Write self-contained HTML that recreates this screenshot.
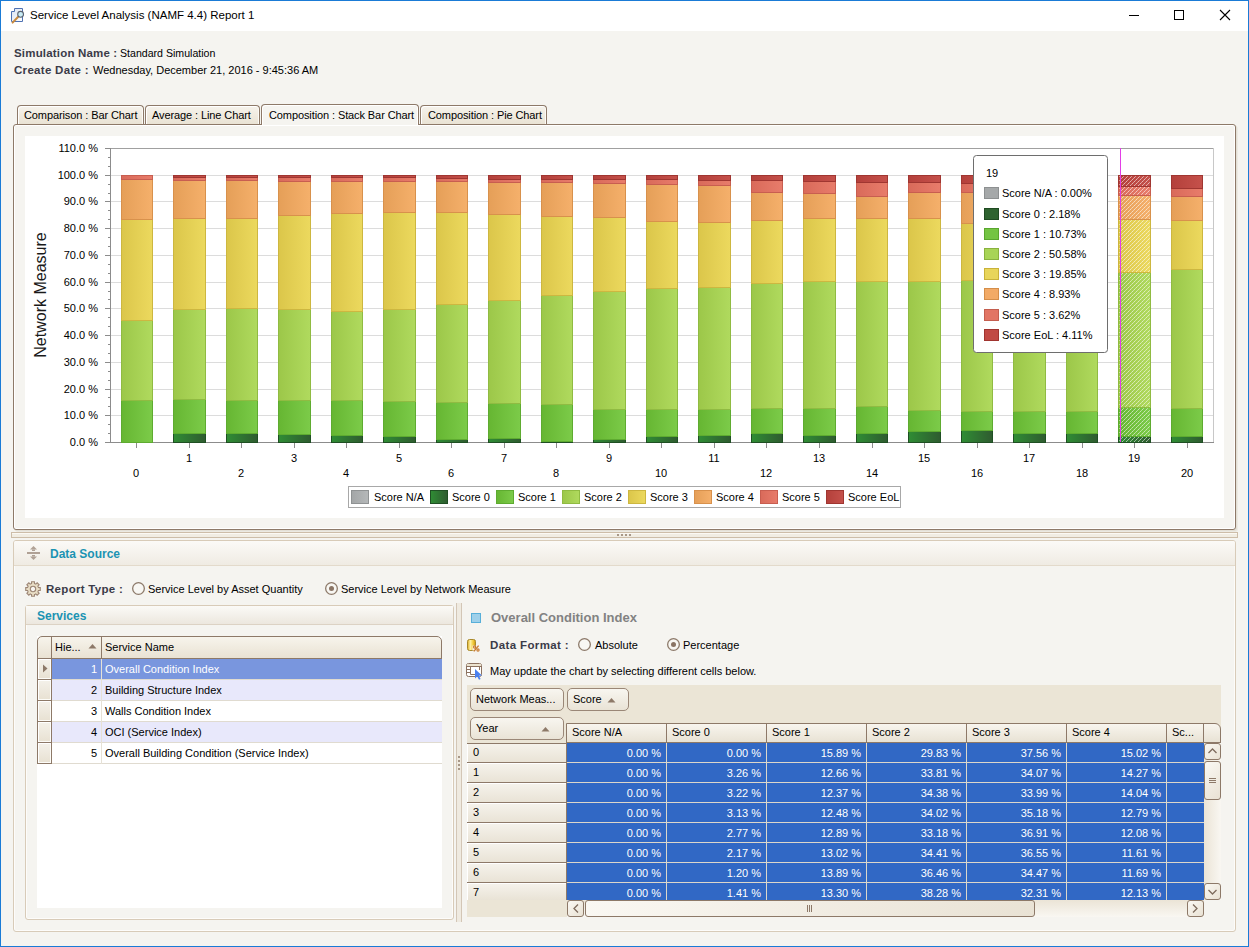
<!DOCTYPE html><html><head><meta charset="utf-8"><style>
html,body{margin:0;padding:0;}
body{width:1249px;height:947px;position:relative;overflow:hidden;background:#f5f4f0;font-family:"Liberation Sans", sans-serif;}
div{font-family:"Liberation Sans", sans-serif;}
</style></head><body>
<div style="position:absolute;left:0px;top:0px;width:1249px;height:947px;box-sizing:border-box;border:1px solid #1a7bd6;"></div>
<div style="position:absolute;left:1px;top:1px;width:1247px;height:30px;box-sizing:border-box;background:#fff;"></div>
<svg style="position:absolute;left:10px;top:7px" width="16" height="17" viewBox="0 0 16 17">
<defs><linearGradient id="docg" x1="0" y1="0" x2="1" y2="1"><stop offset="0" stop-color="#d9e3f3"/><stop offset="1" stop-color="#ffffff"/></linearGradient>
<linearGradient id="hdl" x1="0" y1="0" x2="1" y2="0"><stop offset="0" stop-color="#b87830"/><stop offset="1" stop-color="#f0c070"/></linearGradient></defs>
<path d="M1.5 4.5H4.5V1.5H12.5V14.5H1.5z" fill="url(#docg)" stroke="#4f72b3" stroke-width="1"/>
<path d="M8.2 9.8L2.6 15.6" stroke="#c98b3f" stroke-width="2" stroke-linecap="round"/>
<circle cx="10.6" cy="7.3" r="2.9" fill="#c8ecf6" stroke="#5a6270" stroke-width="1.1"/>
</svg>
<div style="position:absolute;left:30px;top:8.27px;font-size:11.5px;line-height:15.5px;color:#000;font-weight:normal;white-space:nowrap;">Service Level Analysis (NAMF 4.4) Report 1</div>
<div style="position:absolute;left:1129px;top:15px;width:10px;height:1px;box-sizing:border-box;background:#000;"></div>
<div style="position:absolute;left:1174px;top:10px;width:10px;height:10px;box-sizing:border-box;border:1px solid #000;"></div>
<svg style="position:absolute;left:1219px;top:9px" width="12" height="12" viewBox="0 0 12 12"><path d="M1 1L11 11M11 1L1 11" stroke="#000" stroke-width="1.1"/></svg>
<div style="position:absolute;left:14px;top:46.27px;font-size:11.5px;line-height:15.5px;color:#3b3b48;font-weight:bold;white-space:nowrap;letter-spacing:0.18px;">Simulation Name :</div>
<div style="position:absolute;left:120px;top:46.03px;font-size:10.6px;line-height:14.6px;color:#000;font-weight:normal;white-space:nowrap;">Standard Simulation</div>
<div style="position:absolute;left:14px;top:63.27px;font-size:11.5px;line-height:15.5px;color:#3b3b48;font-weight:bold;white-space:nowrap;letter-spacing:0.3px;">Create Date :</div>
<div style="position:absolute;left:93px;top:62.69px;font-size:11px;line-height:15px;color:#000;font-weight:normal;white-space:nowrap;">Wednesday, December 21, 2016 - 9:45:36 AM</div>
<div style="position:absolute;left:17px;top:105px;width:127px;height:20px;box-sizing:border-box;border:1px solid #8d7968;border-bottom:none;border-radius:4px 4px 0 0;background:linear-gradient(#f6f3ec,#e9e2d3);box-shadow:inset 1px 1px 0 #fff,inset -1px 0 0 #fbfaf6;"></div>
<div style="position:absolute;left:24px;top:107.69px;font-size:11px;line-height:15px;color:#000;font-weight:normal;white-space:nowrap;letter-spacing:-0.1px;">Comparison : Bar Chart</div>
<div style="position:absolute;left:145px;top:105px;width:115px;height:20px;box-sizing:border-box;border:1px solid #8d7968;border-bottom:none;border-radius:4px 4px 0 0;background:linear-gradient(#f6f3ec,#e9e2d3);box-shadow:inset 1px 1px 0 #fff,inset -1px 0 0 #fbfaf6;"></div>
<div style="position:absolute;left:152px;top:107.69px;font-size:11px;line-height:15px;color:#000;font-weight:normal;white-space:nowrap;letter-spacing:-0.1px;">Average : Line Chart</div>
<div style="position:absolute;left:420px;top:105px;width:127px;height:20px;box-sizing:border-box;border:1px solid #8d7968;border-bottom:none;border-radius:4px 4px 0 0;background:linear-gradient(#f6f3ec,#e9e2d3);box-shadow:inset 1px 1px 0 #fff,inset -1px 0 0 #fbfaf6;"></div>
<div style="position:absolute;left:428px;top:107.69px;font-size:11px;line-height:15px;color:#000;font-weight:normal;white-space:nowrap;letter-spacing:-0.1px;">Composition : Pie Chart</div>
<div style="position:absolute;left:13px;top:124px;width:1223px;height:406px;box-sizing:border-box;border:1px solid #8d7968;border-radius:3px;background:#f5f4f0;box-shadow:inset 0 0 0 1px #fff, 1px 1px 0 #e3dfd5, 2px 2px 0 #eceae3;"></div>
<div style="position:absolute;left:261px;top:104px;width:158px;height:21px;box-sizing:border-box;border:1px solid #8d7968;border-bottom:none;border-radius:4px 4px 0 0;background:#f5f4f0;box-shadow:inset 1px 1px 0 #fff,inset -1px 0 0 #fff;"></div>
<div style="position:absolute;left:263px;top:124px;width:154px;height:1px;box-sizing:border-box;background:#f5f4f0;"></div>
<div style="position:absolute;left:269px;top:107.69px;font-size:11px;line-height:15px;color:#000;font-weight:normal;white-space:nowrap;letter-spacing:-0.1px;">Composition : Stack Bar Chart</div>
<div style="position:absolute;left:25px;top:136px;width:1199px;height:382px;box-sizing:border-box;background:#fff;"></div>
<svg style="position:absolute;left:25px;top:136px" width="1199" height="382" viewBox="25 136 1199 382" shape-rendering="crispEdges">
<defs>
<linearGradient id="gna" x1="0" y1="0" x2="1" y2="0"><stop offset="0" stop-color="#a3a6a7"/><stop offset="1" stop-color="#b5b8b9"/></linearGradient>
<linearGradient id="gs0" x1="0" y1="0" x2="1" y2="0"><stop offset="0" stop-color="#2f8d34"/><stop offset="1" stop-color="#2f5b30"/></linearGradient>
<linearGradient id="gs1" x1="0" y1="0" x2="1" y2="0"><stop offset="0" stop-color="#66b632"/><stop offset="1" stop-color="#7ccb49"/></linearGradient>
<linearGradient id="gs2" x1="0" y1="0" x2="1" y2="0"><stop offset="0" stop-color="#9cc749"/><stop offset="1" stop-color="#b0da5e"/></linearGradient>
<linearGradient id="gs3" x1="0" y1="0" x2="1" y2="0"><stop offset="0" stop-color="#dbc64a"/><stop offset="1" stop-color="#ecd95e"/></linearGradient>
<linearGradient id="gs4" x1="0" y1="0" x2="1" y2="0"><stop offset="0" stop-color="#e59f58"/><stop offset="1" stop-color="#f5b06b"/></linearGradient>
<linearGradient id="gs5" x1="0" y1="0" x2="1" y2="0"><stop offset="0" stop-color="#d96a5a"/><stop offset="1" stop-color="#e87c6b"/></linearGradient>
<linearGradient id="geol" x1="0" y1="0" x2="1" y2="0"><stop offset="0" stop-color="#b4403b"/><stop offset="1" stop-color="#c5514b"/></linearGradient>
<pattern id="hatch" width="4" height="4" patternUnits="userSpaceOnUse"><rect x="0" y="3" width="1" height="1" fill="rgba(255,255,255,0.6)"/><rect x="1" y="2" width="1" height="1" fill="rgba(255,255,255,0.45)"/><rect x="2" y="1" width="1" height="1" fill="rgba(255,255,255,0.6)"/><rect x="3" y="0" width="1" height="1" fill="rgba(255,255,255,0.45)"/></pattern>
</defs>
<line x1="110" y1="415.5" x2="1214" y2="415.5" stroke="#dcdcdc" stroke-width="1"/>
<line x1="110" y1="389.5" x2="1214" y2="389.5" stroke="#dcdcdc" stroke-width="1"/>
<line x1="110" y1="362.5" x2="1214" y2="362.5" stroke="#dcdcdc" stroke-width="1"/>
<line x1="110" y1="335.5" x2="1214" y2="335.5" stroke="#dcdcdc" stroke-width="1"/>
<line x1="110" y1="308.5" x2="1214" y2="308.5" stroke="#dcdcdc" stroke-width="1"/>
<line x1="110" y1="282.5" x2="1214" y2="282.5" stroke="#dcdcdc" stroke-width="1"/>
<line x1="110" y1="255.5" x2="1214" y2="255.5" stroke="#dcdcdc" stroke-width="1"/>
<line x1="110" y1="228.5" x2="1214" y2="228.5" stroke="#dcdcdc" stroke-width="1"/>
<line x1="110" y1="201.5" x2="1214" y2="201.5" stroke="#dcdcdc" stroke-width="1"/>
<line x1="110" y1="175.5" x2="1214" y2="175.5" stroke="#dcdcdc" stroke-width="1"/>
<line x1="110" y1="148.5" x2="1214" y2="148.5" stroke="#a0a0a0" stroke-width="1"/>
<line x1="1213.5" y1="148" x2="1213.5" y2="442" stroke="#c8c8c8" stroke-width="1"/>
<line x1="105" y1="442.5" x2="1214" y2="442.5" stroke="#8c8c8c" stroke-width="1"/>
<rect x="121.5" y="400.5" width="31" height="42" fill="url(#gs1)" stroke="#5eab30" stroke-width="1"/>
<rect x="121.5" y="320.5" width="31" height="80" fill="url(#gs2)" stroke="#90bb42" stroke-width="1"/>
<rect x="121.5" y="219.5" width="31" height="101" fill="url(#gs3)" stroke="#cdb740" stroke-width="1"/>
<rect x="121.5" y="179.5" width="31" height="40" fill="url(#gs4)" stroke="#d8914c" stroke-width="1"/>
<rect x="121.5" y="175.5" width="31" height="4" fill="url(#gs5)" stroke="#c85e50" stroke-width="1"/>
<rect x="173.5" y="433.5" width="32" height="9" fill="url(#gs0)" stroke="#1f4f23" stroke-width="1"/>
<rect x="173.5" y="399.5" width="32" height="34" fill="url(#gs1)" stroke="#5eab30" stroke-width="1"/>
<rect x="173.5" y="309.5" width="32" height="90" fill="url(#gs2)" stroke="#90bb42" stroke-width="1"/>
<rect x="173.5" y="218.5" width="32" height="91" fill="url(#gs3)" stroke="#cdb740" stroke-width="1"/>
<rect x="173.5" y="180.5" width="32" height="38" fill="url(#gs4)" stroke="#d8914c" stroke-width="1"/>
<rect x="173.5" y="177.5" width="32" height="3" fill="url(#gs5)" stroke="#c85e50" stroke-width="1"/>
<rect x="173.5" y="175.5" width="32" height="2" fill="url(#geol)" stroke="#a03631" stroke-width="1"/>
<rect x="226.5" y="433.5" width="31" height="9" fill="url(#gs0)" stroke="#1f4f23" stroke-width="1"/>
<rect x="226.5" y="400.5" width="31" height="33" fill="url(#gs1)" stroke="#5eab30" stroke-width="1"/>
<rect x="226.5" y="308.5" width="31" height="92" fill="url(#gs2)" stroke="#90bb42" stroke-width="1"/>
<rect x="226.5" y="218.5" width="31" height="90" fill="url(#gs3)" stroke="#cdb740" stroke-width="1"/>
<rect x="226.5" y="180.5" width="31" height="38" fill="url(#gs4)" stroke="#d8914c" stroke-width="1"/>
<rect x="226.5" y="177.5" width="31" height="3" fill="url(#gs5)" stroke="#c85e50" stroke-width="1"/>
<rect x="226.5" y="175.5" width="31" height="2" fill="url(#geol)" stroke="#a03631" stroke-width="1"/>
<rect x="278.5" y="434.5" width="32" height="8" fill="url(#gs0)" stroke="#1f4f23" stroke-width="1"/>
<rect x="278.5" y="400.5" width="32" height="34" fill="url(#gs1)" stroke="#5eab30" stroke-width="1"/>
<rect x="278.5" y="309.5" width="32" height="91" fill="url(#gs2)" stroke="#90bb42" stroke-width="1"/>
<rect x="278.5" y="215.5" width="32" height="94" fill="url(#gs3)" stroke="#cdb740" stroke-width="1"/>
<rect x="278.5" y="181.5" width="32" height="34" fill="url(#gs4)" stroke="#d8914c" stroke-width="1"/>
<rect x="278.5" y="177.5" width="32" height="4" fill="url(#gs5)" stroke="#c85e50" stroke-width="1"/>
<rect x="278.5" y="175.5" width="32" height="2" fill="url(#geol)" stroke="#a03631" stroke-width="1"/>
<rect x="331.5" y="435.5" width="31" height="7" fill="url(#gs0)" stroke="#1f4f23" stroke-width="1"/>
<rect x="331.5" y="400.5" width="31" height="35" fill="url(#gs1)" stroke="#5eab30" stroke-width="1"/>
<rect x="331.5" y="311.5" width="31" height="89" fill="url(#gs2)" stroke="#90bb42" stroke-width="1"/>
<rect x="331.5" y="213.5" width="31" height="98" fill="url(#gs3)" stroke="#cdb740" stroke-width="1"/>
<rect x="331.5" y="181.5" width="31" height="32" fill="url(#gs4)" stroke="#d8914c" stroke-width="1"/>
<rect x="331.5" y="177.5" width="31" height="4" fill="url(#gs5)" stroke="#c85e50" stroke-width="1"/>
<rect x="331.5" y="175.5" width="31" height="2" fill="url(#geol)" stroke="#a03631" stroke-width="1"/>
<rect x="383.5" y="436.5" width="32" height="6" fill="url(#gs0)" stroke="#1f4f23" stroke-width="1"/>
<rect x="383.5" y="401.5" width="32" height="35" fill="url(#gs1)" stroke="#5eab30" stroke-width="1"/>
<rect x="383.5" y="309.5" width="32" height="92" fill="url(#gs2)" stroke="#90bb42" stroke-width="1"/>
<rect x="383.5" y="212.5" width="32" height="97" fill="url(#gs3)" stroke="#cdb740" stroke-width="1"/>
<rect x="383.5" y="181.5" width="32" height="31" fill="url(#gs4)" stroke="#d8914c" stroke-width="1"/>
<rect x="383.5" y="177.5" width="32" height="4" fill="url(#gs5)" stroke="#c85e50" stroke-width="1"/>
<rect x="383.5" y="175.5" width="32" height="2" fill="url(#geol)" stroke="#a03631" stroke-width="1"/>
<rect x="436.5" y="439.5" width="31" height="3" fill="url(#gs0)" stroke="#1f4f23" stroke-width="1"/>
<rect x="436.5" y="402.5" width="31" height="37" fill="url(#gs1)" stroke="#5eab30" stroke-width="1"/>
<rect x="436.5" y="304.5" width="31" height="98" fill="url(#gs2)" stroke="#90bb42" stroke-width="1"/>
<rect x="436.5" y="212.5" width="31" height="92" fill="url(#gs3)" stroke="#cdb740" stroke-width="1"/>
<rect x="436.5" y="181.5" width="31" height="31" fill="url(#gs4)" stroke="#d8914c" stroke-width="1"/>
<rect x="436.5" y="178.5" width="31" height="3" fill="url(#gs5)" stroke="#c85e50" stroke-width="1"/>
<rect x="436.5" y="175.5" width="31" height="3" fill="url(#geol)" stroke="#a03631" stroke-width="1"/>
<rect x="488.5" y="438.5" width="32" height="4" fill="url(#gs0)" stroke="#1f4f23" stroke-width="1"/>
<rect x="488.5" y="403.5" width="32" height="35" fill="url(#gs1)" stroke="#5eab30" stroke-width="1"/>
<rect x="488.5" y="300.5" width="32" height="103" fill="url(#gs2)" stroke="#90bb42" stroke-width="1"/>
<rect x="488.5" y="214.5" width="32" height="86" fill="url(#gs3)" stroke="#cdb740" stroke-width="1"/>
<rect x="488.5" y="182.5" width="32" height="32" fill="url(#gs4)" stroke="#d8914c" stroke-width="1"/>
<rect x="488.5" y="179.5" width="32" height="3" fill="url(#gs5)" stroke="#c85e50" stroke-width="1"/>
<rect x="488.5" y="175.5" width="32" height="4" fill="url(#geol)" stroke="#a03631" stroke-width="1"/>
<rect x="541.5" y="441.5" width="31" height="1" fill="url(#gs0)" stroke="#1f4f23" stroke-width="1"/>
<rect x="541.5" y="404.5" width="31" height="37" fill="url(#gs1)" stroke="#5eab30" stroke-width="1"/>
<rect x="541.5" y="295.5" width="31" height="109" fill="url(#gs2)" stroke="#90bb42" stroke-width="1"/>
<rect x="541.5" y="216.5" width="31" height="79" fill="url(#gs3)" stroke="#cdb740" stroke-width="1"/>
<rect x="541.5" y="182.5" width="31" height="34" fill="url(#gs4)" stroke="#d8914c" stroke-width="1"/>
<rect x="541.5" y="179.5" width="31" height="3" fill="url(#gs5)" stroke="#c85e50" stroke-width="1"/>
<rect x="541.5" y="175.5" width="31" height="4" fill="url(#geol)" stroke="#a03631" stroke-width="1"/>
<rect x="593.5" y="439.5" width="32" height="3" fill="url(#gs0)" stroke="#1f4f23" stroke-width="1"/>
<rect x="593.5" y="409.5" width="32" height="30" fill="url(#gs1)" stroke="#5eab30" stroke-width="1"/>
<rect x="593.5" y="291.5" width="32" height="118" fill="url(#gs2)" stroke="#90bb42" stroke-width="1"/>
<rect x="593.5" y="217.5" width="32" height="74" fill="url(#gs3)" stroke="#cdb740" stroke-width="1"/>
<rect x="593.5" y="183.5" width="32" height="34" fill="url(#gs4)" stroke="#d8914c" stroke-width="1"/>
<rect x="593.5" y="179.5" width="32" height="4" fill="url(#gs5)" stroke="#c85e50" stroke-width="1"/>
<rect x="593.5" y="175.5" width="32" height="4" fill="url(#geol)" stroke="#a03631" stroke-width="1"/>
<rect x="646.5" y="436.5" width="31" height="6" fill="url(#gs0)" stroke="#1f4f23" stroke-width="1"/>
<rect x="646.5" y="409.5" width="31" height="27" fill="url(#gs1)" stroke="#5eab30" stroke-width="1"/>
<rect x="646.5" y="288.5" width="31" height="121" fill="url(#gs2)" stroke="#90bb42" stroke-width="1"/>
<rect x="646.5" y="221.5" width="31" height="67" fill="url(#gs3)" stroke="#cdb740" stroke-width="1"/>
<rect x="646.5" y="184.5" width="31" height="37" fill="url(#gs4)" stroke="#d8914c" stroke-width="1"/>
<rect x="646.5" y="179.5" width="31" height="5" fill="url(#gs5)" stroke="#c85e50" stroke-width="1"/>
<rect x="646.5" y="175.5" width="31" height="4" fill="url(#geol)" stroke="#a03631" stroke-width="1"/>
<rect x="698.5" y="435.5" width="32" height="7" fill="url(#gs0)" stroke="#1f4f23" stroke-width="1"/>
<rect x="698.5" y="409.5" width="32" height="26" fill="url(#gs1)" stroke="#5eab30" stroke-width="1"/>
<rect x="698.5" y="287.5" width="32" height="122" fill="url(#gs2)" stroke="#90bb42" stroke-width="1"/>
<rect x="698.5" y="222.5" width="32" height="65" fill="url(#gs3)" stroke="#cdb740" stroke-width="1"/>
<rect x="698.5" y="185.5" width="32" height="37" fill="url(#gs4)" stroke="#d8914c" stroke-width="1"/>
<rect x="698.5" y="180.5" width="32" height="5" fill="url(#gs5)" stroke="#c85e50" stroke-width="1"/>
<rect x="698.5" y="175.5" width="32" height="5" fill="url(#geol)" stroke="#a03631" stroke-width="1"/>
<rect x="751.5" y="433.5" width="31" height="9" fill="url(#gs0)" stroke="#1f4f23" stroke-width="1"/>
<rect x="751.5" y="408.5" width="31" height="25" fill="url(#gs1)" stroke="#5eab30" stroke-width="1"/>
<rect x="751.5" y="283.5" width="31" height="125" fill="url(#gs2)" stroke="#90bb42" stroke-width="1"/>
<rect x="751.5" y="220.5" width="31" height="63" fill="url(#gs3)" stroke="#cdb740" stroke-width="1"/>
<rect x="751.5" y="192.5" width="31" height="28" fill="url(#gs4)" stroke="#d8914c" stroke-width="1"/>
<rect x="751.5" y="180.5" width="31" height="12" fill="url(#gs5)" stroke="#c85e50" stroke-width="1"/>
<rect x="751.5" y="175.5" width="31" height="5" fill="url(#geol)" stroke="#a03631" stroke-width="1"/>
<rect x="803.5" y="435.5" width="32" height="7" fill="url(#gs0)" stroke="#1f4f23" stroke-width="1"/>
<rect x="803.5" y="408.5" width="32" height="27" fill="url(#gs1)" stroke="#5eab30" stroke-width="1"/>
<rect x="803.5" y="281.5" width="32" height="127" fill="url(#gs2)" stroke="#90bb42" stroke-width="1"/>
<rect x="803.5" y="218.5" width="32" height="63" fill="url(#gs3)" stroke="#cdb740" stroke-width="1"/>
<rect x="803.5" y="193.5" width="32" height="25" fill="url(#gs4)" stroke="#d8914c" stroke-width="1"/>
<rect x="803.5" y="181.5" width="32" height="12" fill="url(#gs5)" stroke="#c85e50" stroke-width="1"/>
<rect x="803.5" y="175.5" width="32" height="6" fill="url(#geol)" stroke="#a03631" stroke-width="1"/>
<rect x="856.5" y="433.5" width="31" height="9" fill="url(#gs0)" stroke="#1f4f23" stroke-width="1"/>
<rect x="856.5" y="406.5" width="31" height="27" fill="url(#gs1)" stroke="#5eab30" stroke-width="1"/>
<rect x="856.5" y="281.5" width="31" height="125" fill="url(#gs2)" stroke="#90bb42" stroke-width="1"/>
<rect x="856.5" y="218.5" width="31" height="63" fill="url(#gs3)" stroke="#cdb740" stroke-width="1"/>
<rect x="856.5" y="196.5" width="31" height="22" fill="url(#gs4)" stroke="#d8914c" stroke-width="1"/>
<rect x="856.5" y="182.5" width="31" height="14" fill="url(#gs5)" stroke="#c85e50" stroke-width="1"/>
<rect x="856.5" y="175.5" width="31" height="7" fill="url(#geol)" stroke="#a03631" stroke-width="1"/>
<rect x="908.5" y="431.5" width="32" height="11" fill="url(#gs0)" stroke="#1f4f23" stroke-width="1"/>
<rect x="908.5" y="410.5" width="32" height="21" fill="url(#gs1)" stroke="#5eab30" stroke-width="1"/>
<rect x="908.5" y="281.5" width="32" height="129" fill="url(#gs2)" stroke="#90bb42" stroke-width="1"/>
<rect x="908.5" y="218.5" width="32" height="63" fill="url(#gs3)" stroke="#cdb740" stroke-width="1"/>
<rect x="908.5" y="192.5" width="32" height="26" fill="url(#gs4)" stroke="#d8914c" stroke-width="1"/>
<rect x="908.5" y="182.5" width="32" height="10" fill="url(#gs5)" stroke="#c85e50" stroke-width="1"/>
<rect x="908.5" y="175.5" width="32" height="7" fill="url(#geol)" stroke="#a03631" stroke-width="1"/>
<rect x="961.5" y="430.5" width="31" height="12" fill="url(#gs0)" stroke="#1f4f23" stroke-width="1"/>
<rect x="961.5" y="411.5" width="31" height="19" fill="url(#gs1)" stroke="#5eab30" stroke-width="1"/>
<rect x="961.5" y="280.5" width="31" height="131" fill="url(#gs2)" stroke="#90bb42" stroke-width="1"/>
<rect x="961.5" y="223.5" width="31" height="57" fill="url(#gs3)" stroke="#cdb740" stroke-width="1"/>
<rect x="961.5" y="192.5" width="31" height="31" fill="url(#gs4)" stroke="#d8914c" stroke-width="1"/>
<rect x="961.5" y="183.5" width="31" height="9" fill="url(#gs5)" stroke="#c85e50" stroke-width="1"/>
<rect x="961.5" y="175.5" width="31" height="8" fill="url(#geol)" stroke="#a03631" stroke-width="1"/>
<rect x="1013.5" y="433.5" width="32" height="9" fill="url(#gs0)" stroke="#1f4f23" stroke-width="1"/>
<rect x="1013.5" y="411.5" width="32" height="22" fill="url(#gs1)" stroke="#5eab30" stroke-width="1"/>
<rect x="1013.5" y="276.5" width="32" height="135" fill="url(#gs2)" stroke="#90bb42" stroke-width="1"/>
<rect x="1013.5" y="221.5" width="32" height="55" fill="url(#gs3)" stroke="#cdb740" stroke-width="1"/>
<rect x="1013.5" y="195.5" width="32" height="26" fill="url(#gs4)" stroke="#d8914c" stroke-width="1"/>
<rect x="1013.5" y="184.5" width="32" height="11" fill="url(#gs5)" stroke="#c85e50" stroke-width="1"/>
<rect x="1013.5" y="175.5" width="32" height="9" fill="url(#geol)" stroke="#a03631" stroke-width="1"/>
<rect x="1066.5" y="433.5" width="31" height="9" fill="url(#gs0)" stroke="#1f4f23" stroke-width="1"/>
<rect x="1066.5" y="411.5" width="31" height="22" fill="url(#gs1)" stroke="#5eab30" stroke-width="1"/>
<rect x="1066.5" y="274.5" width="31" height="137" fill="url(#gs2)" stroke="#90bb42" stroke-width="1"/>
<rect x="1066.5" y="220.5" width="31" height="54" fill="url(#gs3)" stroke="#cdb740" stroke-width="1"/>
<rect x="1066.5" y="195.5" width="31" height="25" fill="url(#gs4)" stroke="#d8914c" stroke-width="1"/>
<rect x="1066.5" y="185.5" width="31" height="10" fill="url(#gs5)" stroke="#c85e50" stroke-width="1"/>
<rect x="1066.5" y="175.5" width="31" height="10" fill="url(#geol)" stroke="#a03631" stroke-width="1"/>
<rect x="1118.5" y="436.5" width="32" height="6" fill="url(#gs0)" stroke="#1f4f23" stroke-width="1"/>
<rect x="1119" y="437" width="31" height="5" fill="url(#hatch)"/>
<rect x="1118.5" y="407.5" width="32" height="29" fill="url(#gs1)" stroke="#5eab30" stroke-width="1"/>
<rect x="1119" y="408" width="31" height="28" fill="url(#hatch)"/>
<rect x="1118.5" y="272.5" width="32" height="135" fill="url(#gs2)" stroke="#90bb42" stroke-width="1"/>
<rect x="1119" y="273" width="31" height="134" fill="url(#hatch)"/>
<rect x="1118.5" y="219.5" width="32" height="53" fill="url(#gs3)" stroke="#cdb740" stroke-width="1"/>
<rect x="1119" y="220" width="31" height="52" fill="url(#hatch)"/>
<rect x="1118.5" y="195.5" width="32" height="24" fill="url(#gs4)" stroke="#d8914c" stroke-width="1"/>
<rect x="1119" y="196" width="31" height="23" fill="url(#hatch)"/>
<rect x="1118.5" y="186.5" width="32" height="9" fill="url(#gs5)" stroke="#c85e50" stroke-width="1"/>
<rect x="1119" y="187" width="31" height="8" fill="url(#hatch)"/>
<rect x="1118.5" y="175.5" width="32" height="11" fill="url(#geol)" stroke="#a03631" stroke-width="1"/>
<rect x="1119" y="176" width="31" height="10" fill="url(#hatch)"/>
<rect x="1171.5" y="436.5" width="31" height="6" fill="url(#gs0)" stroke="#1f4f23" stroke-width="1"/>
<rect x="1171.5" y="408.5" width="31" height="28" fill="url(#gs1)" stroke="#5eab30" stroke-width="1"/>
<rect x="1171.5" y="269.5" width="31" height="139" fill="url(#gs2)" stroke="#90bb42" stroke-width="1"/>
<rect x="1171.5" y="220.5" width="31" height="49" fill="url(#gs3)" stroke="#cdb740" stroke-width="1"/>
<rect x="1171.5" y="196.5" width="31" height="24" fill="url(#gs4)" stroke="#d8914c" stroke-width="1"/>
<rect x="1171.5" y="188.5" width="31" height="8" fill="url(#gs5)" stroke="#c85e50" stroke-width="1"/>
<rect x="1171.5" y="175.5" width="31" height="13" fill="url(#geol)" stroke="#a03631" stroke-width="1"/>
<line x1="110.5" y1="148" x2="110.5" y2="443" stroke="#8c8c8c" stroke-width="1"/>
<line x1="105" y1="442.5" x2="110" y2="442.5" stroke="#8c8c8c" stroke-width="1"/>
<line x1="108" y1="433.5" x2="110" y2="433.5" stroke="#8c8c8c" stroke-width="1"/>
<line x1="108" y1="424.5" x2="110" y2="424.5" stroke="#8c8c8c" stroke-width="1"/>
<line x1="105" y1="415.5" x2="110" y2="415.5" stroke="#8c8c8c" stroke-width="1"/>
<line x1="108" y1="406.5" x2="110" y2="406.5" stroke="#8c8c8c" stroke-width="1"/>
<line x1="108" y1="397.5" x2="110" y2="397.5" stroke="#8c8c8c" stroke-width="1"/>
<line x1="105" y1="389.5" x2="110" y2="389.5" stroke="#8c8c8c" stroke-width="1"/>
<line x1="108" y1="380.5" x2="110" y2="380.5" stroke="#8c8c8c" stroke-width="1"/>
<line x1="108" y1="371.5" x2="110" y2="371.5" stroke="#8c8c8c" stroke-width="1"/>
<line x1="105" y1="362.5" x2="110" y2="362.5" stroke="#8c8c8c" stroke-width="1"/>
<line x1="108" y1="353.5" x2="110" y2="353.5" stroke="#8c8c8c" stroke-width="1"/>
<line x1="108" y1="344.5" x2="110" y2="344.5" stroke="#8c8c8c" stroke-width="1"/>
<line x1="105" y1="335.5" x2="110" y2="335.5" stroke="#8c8c8c" stroke-width="1"/>
<line x1="108" y1="326.5" x2="110" y2="326.5" stroke="#8c8c8c" stroke-width="1"/>
<line x1="108" y1="317.5" x2="110" y2="317.5" stroke="#8c8c8c" stroke-width="1"/>
<line x1="105" y1="308.5" x2="110" y2="308.5" stroke="#8c8c8c" stroke-width="1"/>
<line x1="108" y1="299.5" x2="110" y2="299.5" stroke="#8c8c8c" stroke-width="1"/>
<line x1="108" y1="291.5" x2="110" y2="291.5" stroke="#8c8c8c" stroke-width="1"/>
<line x1="105" y1="282.5" x2="110" y2="282.5" stroke="#8c8c8c" stroke-width="1"/>
<line x1="108" y1="273.5" x2="110" y2="273.5" stroke="#8c8c8c" stroke-width="1"/>
<line x1="108" y1="264.5" x2="110" y2="264.5" stroke="#8c8c8c" stroke-width="1"/>
<line x1="105" y1="255.5" x2="110" y2="255.5" stroke="#8c8c8c" stroke-width="1"/>
<line x1="108" y1="246.5" x2="110" y2="246.5" stroke="#8c8c8c" stroke-width="1"/>
<line x1="108" y1="237.5" x2="110" y2="237.5" stroke="#8c8c8c" stroke-width="1"/>
<line x1="105" y1="228.5" x2="110" y2="228.5" stroke="#8c8c8c" stroke-width="1"/>
<line x1="108" y1="219.5" x2="110" y2="219.5" stroke="#8c8c8c" stroke-width="1"/>
<line x1="108" y1="210.5" x2="110" y2="210.5" stroke="#8c8c8c" stroke-width="1"/>
<line x1="105" y1="201.5" x2="110" y2="201.5" stroke="#8c8c8c" stroke-width="1"/>
<line x1="108" y1="193.5" x2="110" y2="193.5" stroke="#8c8c8c" stroke-width="1"/>
<line x1="108" y1="184.5" x2="110" y2="184.5" stroke="#8c8c8c" stroke-width="1"/>
<line x1="105" y1="175.5" x2="110" y2="175.5" stroke="#8c8c8c" stroke-width="1"/>
<line x1="108" y1="166.5" x2="110" y2="166.5" stroke="#8c8c8c" stroke-width="1"/>
<line x1="108" y1="157.5" x2="110" y2="157.5" stroke="#8c8c8c" stroke-width="1"/>
<line x1="105" y1="148.5" x2="110" y2="148.5" stroke="#8c8c8c" stroke-width="1"/>
<line x1="136.5" y1="443" x2="136.5" y2="448" stroke="#8c8c8c" stroke-width="1"/>
<line x1="189.5" y1="443" x2="189.5" y2="448" stroke="#8c8c8c" stroke-width="1"/>
<line x1="241.5" y1="443" x2="241.5" y2="448" stroke="#8c8c8c" stroke-width="1"/>
<line x1="294.5" y1="443" x2="294.5" y2="448" stroke="#8c8c8c" stroke-width="1"/>
<line x1="346.5" y1="443" x2="346.5" y2="448" stroke="#8c8c8c" stroke-width="1"/>
<line x1="399.5" y1="443" x2="399.5" y2="448" stroke="#8c8c8c" stroke-width="1"/>
<line x1="451.5" y1="443" x2="451.5" y2="448" stroke="#8c8c8c" stroke-width="1"/>
<line x1="504.5" y1="443" x2="504.5" y2="448" stroke="#8c8c8c" stroke-width="1"/>
<line x1="556.5" y1="443" x2="556.5" y2="448" stroke="#8c8c8c" stroke-width="1"/>
<line x1="609.5" y1="443" x2="609.5" y2="448" stroke="#8c8c8c" stroke-width="1"/>
<line x1="661.5" y1="443" x2="661.5" y2="448" stroke="#8c8c8c" stroke-width="1"/>
<line x1="714.5" y1="443" x2="714.5" y2="448" stroke="#8c8c8c" stroke-width="1"/>
<line x1="766.5" y1="443" x2="766.5" y2="448" stroke="#8c8c8c" stroke-width="1"/>
<line x1="819.5" y1="443" x2="819.5" y2="448" stroke="#8c8c8c" stroke-width="1"/>
<line x1="872.5" y1="443" x2="872.5" y2="448" stroke="#8c8c8c" stroke-width="1"/>
<line x1="924.5" y1="443" x2="924.5" y2="448" stroke="#8c8c8c" stroke-width="1"/>
<line x1="977.5" y1="443" x2="977.5" y2="448" stroke="#8c8c8c" stroke-width="1"/>
<line x1="1029.5" y1="443" x2="1029.5" y2="448" stroke="#8c8c8c" stroke-width="1"/>
<line x1="1082.5" y1="443" x2="1082.5" y2="448" stroke="#8c8c8c" stroke-width="1"/>
<line x1="1134.5" y1="443" x2="1134.5" y2="448" stroke="#8c8c8c" stroke-width="1"/>
<line x1="1187.5" y1="443" x2="1187.5" y2="448" stroke="#8c8c8c" stroke-width="1"/>
<line x1="1120.5" y1="148" x2="1120.5" y2="442" stroke="#e23ee6" stroke-width="1"/>
<rect x="973.5" y="155.5" width="134" height="197" rx="3" ry="3" fill="#fff" stroke="#6e6e6e" stroke-width="1" shape-rendering="geometricPrecision"/>
<rect x="984.5" y="187.5" width="14" height="11" fill="#a5a8a9" stroke="#8d9091" stroke-width="1"/>
<rect x="984.5" y="208.5" width="14" height="11" fill="#2e6330" stroke="#1f4a22" stroke-width="1"/>
<rect x="984.5" y="228.5" width="14" height="11" fill="#74c443" stroke="#5aa62e" stroke-width="1"/>
<rect x="984.5" y="248.5" width="14" height="11" fill="#a8d456" stroke="#8ab23e" stroke-width="1"/>
<rect x="984.5" y="268.5" width="14" height="11" fill="#e8d55a" stroke="#c9b23a" stroke-width="1"/>
<rect x="984.5" y="288.5" width="14" height="11" fill="#f2aa66" stroke="#d48e4a" stroke-width="1"/>
<rect x="984.5" y="309.5" width="14" height="11" fill="#e27564" stroke="#c45e4f" stroke-width="1"/>
<rect x="984.5" y="329.5" width="14" height="11" fill="#c14a44" stroke="#a0342f" stroke-width="1"/>
<rect x="348.5" y="486.5" width="552" height="21" fill="#fff" stroke="#a8a8a8" stroke-width="1"/>
<rect x="351.5" y="490.5" width="17" height="13" fill="url(#gna)" stroke="#8f9293" stroke-width="1"/>
<rect x="430.5" y="490.5" width="17" height="13" fill="url(#gs0)" stroke="#1f4f23" stroke-width="1"/>
<rect x="496.5" y="490.5" width="17" height="13" fill="url(#gs1)" stroke="#5eab30" stroke-width="1"/>
<rect x="562.5" y="490.5" width="17" height="13" fill="url(#gs2)" stroke="#90bb42" stroke-width="1"/>
<rect x="628.5" y="490.5" width="17" height="13" fill="url(#gs3)" stroke="#cdb740" stroke-width="1"/>
<rect x="694.5" y="490.5" width="17" height="13" fill="url(#gs4)" stroke="#d8914c" stroke-width="1"/>
<rect x="760.5" y="490.5" width="17" height="13" fill="url(#gs5)" stroke="#c85e50" stroke-width="1"/>
<rect x="826.5" y="490.5" width="17" height="13" fill="url(#geol)" stroke="#a03631" stroke-width="1"/>
</svg>
<div style="position:absolute;right:1151px;top:434.69px;font-size:11px;line-height:15px;color:#000;font-weight:normal;white-space:nowrap;text-align:right;">0.0 %</div>
<div style="position:absolute;right:1151px;top:407.69px;font-size:11px;line-height:15px;color:#000;font-weight:normal;white-space:nowrap;text-align:right;">10.0 %</div>
<div style="position:absolute;right:1151px;top:381.69px;font-size:11px;line-height:15px;color:#000;font-weight:normal;white-space:nowrap;text-align:right;">20.0 %</div>
<div style="position:absolute;right:1151px;top:354.69px;font-size:11px;line-height:15px;color:#000;font-weight:normal;white-space:nowrap;text-align:right;">30.0 %</div>
<div style="position:absolute;right:1151px;top:327.69px;font-size:11px;line-height:15px;color:#000;font-weight:normal;white-space:nowrap;text-align:right;">40.0 %</div>
<div style="position:absolute;right:1151px;top:300.69px;font-size:11px;line-height:15px;color:#000;font-weight:normal;white-space:nowrap;text-align:right;">50.0 %</div>
<div style="position:absolute;right:1151px;top:274.69px;font-size:11px;line-height:15px;color:#000;font-weight:normal;white-space:nowrap;text-align:right;">60.0 %</div>
<div style="position:absolute;right:1151px;top:247.69px;font-size:11px;line-height:15px;color:#000;font-weight:normal;white-space:nowrap;text-align:right;">70.0 %</div>
<div style="position:absolute;right:1151px;top:220.69px;font-size:11px;line-height:15px;color:#000;font-weight:normal;white-space:nowrap;text-align:right;">80.0 %</div>
<div style="position:absolute;right:1151px;top:193.69px;font-size:11px;line-height:15px;color:#000;font-weight:normal;white-space:nowrap;text-align:right;">90.0 %</div>
<div style="position:absolute;right:1151px;top:167.69px;font-size:11px;line-height:15px;color:#000;font-weight:normal;white-space:nowrap;text-align:right;">100.0 %</div>
<div style="position:absolute;right:1151px;top:140.69px;font-size:11px;line-height:15px;color:#000;font-weight:normal;white-space:nowrap;text-align:right;">110.0 %</div>
<div style="position:absolute;left:40.5px;top:295px;width:0;height:0;"><div style="position:absolute;left:-80px;top:-10px;width:160px;height:20px;text-align:center;font-size:16px;line-height:20px;color:#1a1a1a;transform:rotate(-90deg);white-space:nowrap;">Network Measure</div></div>
<div style="position:absolute;left:86px;width:100px;text-align:center;top:465.69px;font-size:11px;line-height:15px;color:#000;font-weight:normal;white-space:nowrap;">0</div>
<div style="position:absolute;left:139px;width:100px;text-align:center;top:450.69px;font-size:11px;line-height:15px;color:#000;font-weight:normal;white-space:nowrap;">1</div>
<div style="position:absolute;left:191px;width:100px;text-align:center;top:465.69px;font-size:11px;line-height:15px;color:#000;font-weight:normal;white-space:nowrap;">2</div>
<div style="position:absolute;left:244px;width:100px;text-align:center;top:450.69px;font-size:11px;line-height:15px;color:#000;font-weight:normal;white-space:nowrap;">3</div>
<div style="position:absolute;left:296px;width:100px;text-align:center;top:465.69px;font-size:11px;line-height:15px;color:#000;font-weight:normal;white-space:nowrap;">4</div>
<div style="position:absolute;left:349px;width:100px;text-align:center;top:450.69px;font-size:11px;line-height:15px;color:#000;font-weight:normal;white-space:nowrap;">5</div>
<div style="position:absolute;left:401px;width:100px;text-align:center;top:465.69px;font-size:11px;line-height:15px;color:#000;font-weight:normal;white-space:nowrap;">6</div>
<div style="position:absolute;left:454px;width:100px;text-align:center;top:450.69px;font-size:11px;line-height:15px;color:#000;font-weight:normal;white-space:nowrap;">7</div>
<div style="position:absolute;left:506px;width:100px;text-align:center;top:465.69px;font-size:11px;line-height:15px;color:#000;font-weight:normal;white-space:nowrap;">8</div>
<div style="position:absolute;left:559px;width:100px;text-align:center;top:450.69px;font-size:11px;line-height:15px;color:#000;font-weight:normal;white-space:nowrap;">9</div>
<div style="position:absolute;left:611px;width:100px;text-align:center;top:465.69px;font-size:11px;line-height:15px;color:#000;font-weight:normal;white-space:nowrap;">10</div>
<div style="position:absolute;left:664px;width:100px;text-align:center;top:450.69px;font-size:11px;line-height:15px;color:#000;font-weight:normal;white-space:nowrap;">11</div>
<div style="position:absolute;left:716px;width:100px;text-align:center;top:465.69px;font-size:11px;line-height:15px;color:#000;font-weight:normal;white-space:nowrap;">12</div>
<div style="position:absolute;left:769px;width:100px;text-align:center;top:450.69px;font-size:11px;line-height:15px;color:#000;font-weight:normal;white-space:nowrap;">13</div>
<div style="position:absolute;left:822px;width:100px;text-align:center;top:465.69px;font-size:11px;line-height:15px;color:#000;font-weight:normal;white-space:nowrap;">14</div>
<div style="position:absolute;left:874px;width:100px;text-align:center;top:450.69px;font-size:11px;line-height:15px;color:#000;font-weight:normal;white-space:nowrap;">15</div>
<div style="position:absolute;left:927px;width:100px;text-align:center;top:465.69px;font-size:11px;line-height:15px;color:#000;font-weight:normal;white-space:nowrap;">16</div>
<div style="position:absolute;left:979px;width:100px;text-align:center;top:450.69px;font-size:11px;line-height:15px;color:#000;font-weight:normal;white-space:nowrap;">17</div>
<div style="position:absolute;left:1032px;width:100px;text-align:center;top:465.69px;font-size:11px;line-height:15px;color:#000;font-weight:normal;white-space:nowrap;">18</div>
<div style="position:absolute;left:1084px;width:100px;text-align:center;top:450.69px;font-size:11px;line-height:15px;color:#000;font-weight:normal;white-space:nowrap;">19</div>
<div style="position:absolute;left:1137px;width:100px;text-align:center;top:465.69px;font-size:11px;line-height:15px;color:#000;font-weight:normal;white-space:nowrap;">20</div>
<div style="position:absolute;left:986px;top:165.69px;font-size:11px;line-height:15px;color:#000;font-weight:normal;white-space:nowrap;">19</div>
<div style="position:absolute;left:1002px;top:185.69px;font-size:11px;line-height:15px;color:#000;font-weight:normal;white-space:nowrap;">Score N/A : 0.00%</div>
<div style="position:absolute;left:1002px;top:206.69px;font-size:11px;line-height:15px;color:#000;font-weight:normal;white-space:nowrap;">Score 0 : 2.18%</div>
<div style="position:absolute;left:1002px;top:226.69px;font-size:11px;line-height:15px;color:#000;font-weight:normal;white-space:nowrap;">Score 1 : 10.73%</div>
<div style="position:absolute;left:1002px;top:246.69px;font-size:11px;line-height:15px;color:#000;font-weight:normal;white-space:nowrap;">Score 2 : 50.58%</div>
<div style="position:absolute;left:1002px;top:266.69px;font-size:11px;line-height:15px;color:#000;font-weight:normal;white-space:nowrap;">Score 3 : 19.85%</div>
<div style="position:absolute;left:1002px;top:286.69px;font-size:11px;line-height:15px;color:#000;font-weight:normal;white-space:nowrap;">Score 4 : 8.93%</div>
<div style="position:absolute;left:1002px;top:307.69px;font-size:11px;line-height:15px;color:#000;font-weight:normal;white-space:nowrap;">Score 5 : 3.62%</div>
<div style="position:absolute;left:1002px;top:327.69px;font-size:11px;line-height:15px;color:#000;font-weight:normal;white-space:nowrap;">Score EoL : 4.11%</div>
<div style="position:absolute;left:374px;top:489.69px;font-size:11px;line-height:15px;color:#000;font-weight:normal;white-space:nowrap;">Score N/A</div>
<div style="position:absolute;left:452px;top:489.69px;font-size:11px;line-height:15px;color:#000;font-weight:normal;white-space:nowrap;">Score 0</div>
<div style="position:absolute;left:518px;top:489.69px;font-size:11px;line-height:15px;color:#000;font-weight:normal;white-space:nowrap;">Score 1</div>
<div style="position:absolute;left:584px;top:489.69px;font-size:11px;line-height:15px;color:#000;font-weight:normal;white-space:nowrap;">Score 2</div>
<div style="position:absolute;left:650px;top:489.69px;font-size:11px;line-height:15px;color:#000;font-weight:normal;white-space:nowrap;">Score 3</div>
<div style="position:absolute;left:716px;top:489.69px;font-size:11px;line-height:15px;color:#000;font-weight:normal;white-space:nowrap;">Score 4</div>
<div style="position:absolute;left:782px;top:489.69px;font-size:11px;line-height:15px;color:#000;font-weight:normal;white-space:nowrap;">Score 5</div>
<div style="position:absolute;left:848px;top:489.69px;font-size:11px;line-height:15px;color:#000;font-weight:normal;white-space:nowrap;">Score EoL</div>
<div style="position:absolute;left:11px;top:532px;width:1227px;height:6px;box-sizing:border-box;border:1px solid #cdbda8;background:#f1ede3;box-shadow:inset 0 1px 0 #fbf9f4;"></div>
<div style="position:absolute;left:617px;top:534px;width:2px;height:2px;box-sizing:border-box;background:#a89888;"></div>
<div style="position:absolute;left:621px;top:534px;width:2px;height:2px;box-sizing:border-box;background:#a89888;"></div>
<div style="position:absolute;left:625px;top:534px;width:2px;height:2px;box-sizing:border-box;background:#a89888;"></div>
<div style="position:absolute;left:629px;top:534px;width:2px;height:2px;box-sizing:border-box;background:#a89888;"></div>
<div style="position:absolute;left:13px;top:540px;width:1223px;height:392px;box-sizing:border-box;border:1px solid #d8cbb8;border-radius:3px;background:#f5f4f0;box-shadow:inset 0 0 0 1px #fdfcfa;"></div>
<div style="position:absolute;left:14px;top:541px;width:1221px;height:25px;box-sizing:border-box;background:linear-gradient(#fbfaf7,#efebe3);border-bottom:1px solid #e3dacb;border-radius:2px 2px 0 0;"></div>
<svg style="position:absolute;left:27px;top:545px" width="14" height="16" viewBox="0 0 14 16">
<path d="M6.5 1L10 4.5H3z" fill="#b0a195"/><rect x="5" y="4.5" width="3" height="1.5" fill="#b0a195"/><rect x="0" y="7" width="13" height="2" fill="#b0a195"/><rect x="5" y="10" width="3" height="1.5" fill="#b0a195"/><path d="M3 11.5H10L6.5 15z" fill="#b0a195"/></svg>
<div style="position:absolute;left:50px;top:545.84px;font-size:12px;line-height:16px;color:#1b93b3;font-weight:bold;white-space:nowrap;">Data Source</div>
<svg style="position:absolute;left:25px;top:581px" width="16" height="16" viewBox="-8 -8 16 16"><path d="M-2.14,-5.17 L-1.45,-5.41 L-1.41,-7.26 L1.41,-7.26 L1.45,-5.41 L2.14,-5.17 L2.80,-4.85 L4.14,-6.13 L6.13,-4.14 L4.85,-2.80 L5.17,-2.14 L5.41,-1.45 L7.26,-1.41 L7.26,1.41 L5.41,1.45 L5.17,2.14 L4.85,2.80 L6.13,4.14 L4.14,6.13 L2.80,4.85 L2.14,5.17 L1.45,5.41 L1.41,7.26 L-1.41,7.26 L-1.45,5.41 L-2.14,5.17 L-2.80,4.85 L-4.14,6.13 L-6.13,4.14 L-4.85,2.80 L-5.17,2.14 L-5.41,1.45 L-7.26,1.41 L-7.26,-1.41 L-5.41,-1.45 L-5.17,-2.14 L-4.85,-2.80 L-6.13,-4.14 L-4.14,-6.13 L-2.80,-4.85z" fill="#e9dec6" stroke="#9c8574" stroke-width="1.1"/><circle r="2.7" fill="#f7f5f1" stroke="#9c8574" stroke-width="1.1"/></svg>
<div style="position:absolute;left:46px;top:582.27px;font-size:11.5px;line-height:15.5px;color:#3b3b48;font-weight:bold;white-space:nowrap;letter-spacing:0.3px;">Report Type :</div>
<svg style="position:absolute;left:132px;top:582px" width="13" height="13" viewBox="0 0 13 13"><circle cx="6.5" cy="6.5" r="5.85" fill="#f8f7f3" stroke="#8d7a6a" stroke-width="1.3"/></svg>
<div style="position:absolute;left:148px;top:581.69px;font-size:11px;line-height:15px;color:#000;font-weight:normal;white-space:nowrap;">Service Level by Asset Quantity</div>
<svg style="position:absolute;left:325px;top:582px" width="13" height="13" viewBox="0 0 13 13"><circle cx="6.5" cy="6.5" r="5.85" fill="#f8f7f3" stroke="#8d7a6a" stroke-width="1.3"/><circle cx="6.5" cy="6.5" r="2.5" fill="#8a7464"/></svg>
<div style="position:absolute;left:341px;top:581.69px;font-size:11px;line-height:15px;color:#000;font-weight:normal;white-space:nowrap;">Service Level by Network Measure</div>
<div style="position:absolute;left:25px;top:605px;width:429px;height:315px;box-sizing:border-box;border:1px solid #d8cbb8;border-radius:3px;background:#f5f4f0;box-shadow:inset 0 0 0 1px #fdfcfa;"></div>
<div style="position:absolute;left:26px;top:606px;width:427px;height:19px;box-sizing:border-box;background:linear-gradient(#fbfaf7,#ece7de);border-bottom:1px solid #dcd2c4;"></div>
<div style="position:absolute;left:37px;top:607.84px;font-size:12px;line-height:16px;color:#1b93b3;font-weight:bold;white-space:nowrap;">Services</div>
<div style="position:absolute;left:37px;top:636px;width:405px;height:272px;box-sizing:border-box;background:#fff;"></div>
<div style="position:absolute;left:37px;top:636px;width:405px;height:23px;box-sizing:border-box;border:1px solid #8d7968;border-radius:5px 5px 0 0;background:linear-gradient(#f7f4ec,#e9e2d3);"></div>
<div style="position:absolute;left:51px;top:637px;width:1px;height:22px;box-sizing:border-box;background:#8d7968;"></div>
<div style="position:absolute;left:101px;top:637px;width:1px;height:22px;box-sizing:border-box;background:#8d7968;"></div>
<div style="position:absolute;left:37px;top:658px;width:405px;height:1px;box-sizing:border-box;background:#8d7968;"></div>
<div style="position:absolute;left:55px;top:639.69px;font-size:11px;line-height:15px;color:#000;font-weight:normal;white-space:nowrap;">Hie...</div>
<svg style="position:absolute;left:88px;top:643px" width="9" height="6" viewBox="0 0 9 6"><path d="M0.5 5.5L4.5 1L8.5 5.5z" fill="#8d7968"/></svg>
<div style="position:absolute;left:105px;top:639.69px;font-size:11px;line-height:15px;color:#000;font-weight:normal;white-space:nowrap;">Service Name</div>
<div style="position:absolute;left:52px;top:659px;width:390px;height:21px;box-sizing:border-box;background:#7996de;border-bottom:1px solid #e0dbd0;"></div>
<div style="position:absolute;left:101px;top:659px;width:1px;height:21px;box-sizing:border-box;background:#e6e1d6;"></div>
<div style="position:absolute;left:37px;top:659px;width:15px;height:21px;box-sizing:border-box;border:1px solid #8d7968;border-top:none;background:linear-gradient(#f4f1ea,#e8e1d2);box-shadow:inset 1px 1px 0 #fff,inset -1px -1px 0 #fdfcf8;"></div>
<div style="position:absolute;right:1152px;top:661.69px;font-size:11px;line-height:15px;color:#fff;font-weight:normal;white-space:nowrap;text-align:right;">1</div>
<div style="position:absolute;left:105px;top:661.69px;font-size:11px;line-height:15px;color:#fff;font-weight:normal;white-space:nowrap;">Overall Condition Index</div>
<div style="position:absolute;left:52px;top:680px;width:390px;height:21px;box-sizing:border-box;background:#e8e8fb;border-bottom:1px solid #e0dbd0;"></div>
<div style="position:absolute;left:101px;top:680px;width:1px;height:21px;box-sizing:border-box;background:#e6e1d6;"></div>
<div style="position:absolute;left:37px;top:680px;width:15px;height:21px;box-sizing:border-box;border:1px solid #8d7968;border-top:none;background:linear-gradient(#f4f1ea,#e8e1d2);box-shadow:inset 1px 1px 0 #fff,inset -1px -1px 0 #fdfcf8;"></div>
<div style="position:absolute;right:1152px;top:682.69px;font-size:11px;line-height:15px;color:#000;font-weight:normal;white-space:nowrap;text-align:right;">2</div>
<div style="position:absolute;left:105px;top:682.69px;font-size:11px;line-height:15px;color:#000;font-weight:normal;white-space:nowrap;">Building Structure Index</div>
<div style="position:absolute;left:52px;top:701px;width:390px;height:21px;box-sizing:border-box;background:#fff;border-bottom:1px solid #e0dbd0;"></div>
<div style="position:absolute;left:101px;top:701px;width:1px;height:21px;box-sizing:border-box;background:#e6e1d6;"></div>
<div style="position:absolute;left:37px;top:701px;width:15px;height:21px;box-sizing:border-box;border:1px solid #8d7968;border-top:none;background:linear-gradient(#f4f1ea,#e8e1d2);box-shadow:inset 1px 1px 0 #fff,inset -1px -1px 0 #fdfcf8;"></div>
<div style="position:absolute;right:1152px;top:703.69px;font-size:11px;line-height:15px;color:#000;font-weight:normal;white-space:nowrap;text-align:right;">3</div>
<div style="position:absolute;left:105px;top:703.69px;font-size:11px;line-height:15px;color:#000;font-weight:normal;white-space:nowrap;">Walls Condition Index</div>
<div style="position:absolute;left:52px;top:722px;width:390px;height:21px;box-sizing:border-box;background:#e8e8fb;border-bottom:1px solid #e0dbd0;"></div>
<div style="position:absolute;left:101px;top:722px;width:1px;height:21px;box-sizing:border-box;background:#e6e1d6;"></div>
<div style="position:absolute;left:37px;top:722px;width:15px;height:21px;box-sizing:border-box;border:1px solid #8d7968;border-top:none;background:linear-gradient(#f4f1ea,#e8e1d2);box-shadow:inset 1px 1px 0 #fff,inset -1px -1px 0 #fdfcf8;"></div>
<div style="position:absolute;right:1152px;top:724.69px;font-size:11px;line-height:15px;color:#000;font-weight:normal;white-space:nowrap;text-align:right;">4</div>
<div style="position:absolute;left:105px;top:724.69px;font-size:11px;line-height:15px;color:#000;font-weight:normal;white-space:nowrap;">OCI (Service Index)</div>
<div style="position:absolute;left:52px;top:743px;width:390px;height:21px;box-sizing:border-box;background:#fff;border-bottom:1px solid #e0dbd0;"></div>
<div style="position:absolute;left:101px;top:743px;width:1px;height:21px;box-sizing:border-box;background:#e6e1d6;"></div>
<div style="position:absolute;left:37px;top:743px;width:15px;height:21px;box-sizing:border-box;border:1px solid #8d7968;border-top:none;background:linear-gradient(#f4f1ea,#e8e1d2);box-shadow:inset 1px 1px 0 #fff,inset -1px -1px 0 #fdfcf8;"></div>
<div style="position:absolute;right:1152px;top:745.69px;font-size:11px;line-height:15px;color:#000;font-weight:normal;white-space:nowrap;text-align:right;">5</div>
<div style="position:absolute;left:105px;top:745.69px;font-size:11px;line-height:15px;color:#000;font-weight:normal;white-space:nowrap;">Overall Building Condition (Service Index)</div>
<svg style="position:absolute;left:42px;top:664px" width="6" height="9" viewBox="0 0 6 9"><path d="M1 0.5L5.5 4.5L1 8.5z" fill="#8d7968"/></svg>
<div style="position:absolute;left:456px;top:603px;width:6px;height:319px;box-sizing:border-box;border-left:1px solid #d3c6b6;border-right:1px solid #d3c6b6;background:#efeae0;"></div>
<div style="position:absolute;left:458px;top:756px;width:2px;height:2px;box-sizing:border-box;background:#a89888;"></div>
<div style="position:absolute;left:458px;top:760px;width:2px;height:2px;box-sizing:border-box;background:#a89888;"></div>
<div style="position:absolute;left:458px;top:764px;width:2px;height:2px;box-sizing:border-box;background:#a89888;"></div>
<div style="position:absolute;left:458px;top:768px;width:2px;height:2px;box-sizing:border-box;background:#a89888;"></div>
<div style="position:absolute;left:471px;top:613px;width:10px;height:10px;box-sizing:border-box;background:#9ed0ea;border:1px solid #58afd9;"></div>
<div style="position:absolute;left:491px;top:609.00px;font-size:13px;line-height:17px;color:#828282;font-weight:bold;white-space:nowrap;">Overall Condition Index</div>
<svg style="position:absolute;left:466px;top:638px" width="15" height="15" viewBox="0 0 15 15">
<defs><linearGradient id="dbg" x1="0" y1="0" x2="1" y2="0"><stop offset="0" stop-color="#d9a81c"/><stop offset="0.35" stop-color="#fff2a8"/><stop offset="0.7" stop-color="#f2cb3a"/><stop offset="1" stop-color="#c99614"/></linearGradient></defs>
<rect x="1.5" y="1.5" width="8" height="11" rx="2" fill="url(#dbg)" stroke="#a8892c" stroke-width="1"/>
<path d="M6.5 7.5H9.5V12.5H6.5z" fill="#f6f4f0"/>
<circle cx="8.6" cy="9" r="1.1" fill="none" stroke="#c87a30" stroke-width="1.2"/><circle cx="12" cy="12" r="1.1" fill="none" stroke="#c87a30" stroke-width="1.2"/>
<path d="M12.6 7.6L7.8 13.4" stroke="#c87a30" stroke-width="1.4"/></svg>
<div style="position:absolute;left:490px;top:638.27px;font-size:11.5px;line-height:15.5px;color:#3b3b48;font-weight:bold;white-space:nowrap;letter-spacing:0.38px;">Data Format :</div>
<svg style="position:absolute;left:578px;top:638px" width="13" height="13" viewBox="0 0 13 13"><circle cx="6.5" cy="6.5" r="5.85" fill="#f8f7f3" stroke="#8d7a6a" stroke-width="1.3"/></svg>
<div style="position:absolute;left:595px;top:637.69px;font-size:11px;line-height:15px;color:#000;font-weight:normal;white-space:nowrap;">Absolute</div>
<svg style="position:absolute;left:667px;top:638px" width="13" height="13" viewBox="0 0 13 13"><circle cx="6.5" cy="6.5" r="5.85" fill="#f8f7f3" stroke="#8d7a6a" stroke-width="1.3"/><circle cx="6.5" cy="6.5" r="2.5" fill="#8a7464"/></svg>
<div style="position:absolute;left:683px;top:637.69px;font-size:11px;line-height:15px;color:#000;font-weight:normal;white-space:nowrap;">Percentage</div>
<svg style="position:absolute;left:466px;top:663px" width="17" height="17" viewBox="0 0 17 17">
<rect x="0.5" y="0.5" width="15" height="13" rx="2" fill="#fff" stroke="#8c7260" stroke-width="1"/>
<rect x="1" y="1" width="14" height="2.5" fill="#ebe3cf"/>
<path d="M1 3.5H15M4.5 3.5V11.5M1 6.5H4M1 9.5H4M4.5 11.5H9M13.5 3.5V7" stroke="#8c7260" stroke-width="1" fill="none"/>
<path d="M9 6L9 15.6L11.2 13.4L13 16.8L14.6 15.9L12.9 12.7L16 12.5z" fill="#4a80f0"/></svg>
<div style="position:absolute;left:490px;top:663.69px;font-size:11px;line-height:15px;color:#000;font-weight:normal;white-space:nowrap;">May update the chart by selecting different cells below.</div>
<div style="position:absolute;left:467px;top:685px;width:754px;height:232px;box-sizing:border-box;background:#ebe5d6;"></div>
<div style="position:absolute;left:470px;top:688px;width:94px;height:23px;box-sizing:border-box;border:1px solid #9a8777;border-radius:5px;background:linear-gradient(#f8f6f0,#e9e3d6);"></div>
<div style="position:absolute;left:476px;top:691.69px;font-size:11px;line-height:15px;color:#000;font-weight:normal;white-space:nowrap;">Network Meas...</div>
<div style="position:absolute;left:567px;top:688px;width:62px;height:23px;box-sizing:border-box;border:1px solid #9a8777;border-radius:5px;background:linear-gradient(#f8f6f0,#e9e3d6);"></div>
<div style="position:absolute;left:573px;top:691.69px;font-size:11px;line-height:15px;color:#000;font-weight:normal;white-space:nowrap;">Score</div>
<svg style="position:absolute;left:607px;top:697px" width="9" height="6" viewBox="0 0 9 6"><path d="M0.5 5.5L4.5 1L8.5 5.5z" fill="#8d7968"/></svg>
<div style="position:absolute;left:470px;top:717px;width:94px;height:23px;box-sizing:border-box;border:1px solid #9a8777;border-radius:5px;background:linear-gradient(#f8f6f0,#e9e3d6);"></div>
<div style="position:absolute;left:476px;top:720.69px;font-size:11px;line-height:15px;color:#000;font-weight:normal;white-space:nowrap;">Year</div>
<svg style="position:absolute;left:541px;top:726px" width="9" height="6" viewBox="0 0 9 6"><path d="M0.5 5.5L4.5 1L8.5 5.5z" fill="#8d7968"/></svg>
<div style="position:absolute;left:566px;top:723px;width:655px;height:20px;box-sizing:border-box;border:1px solid #8d7968;border-right:1px solid #8d7968;border-radius:0 6px 0 0;background:linear-gradient(#f8f5ee,#e8e2d4);"></div>
<div style="position:absolute;left:572px;top:724.69px;font-size:11px;line-height:15px;color:#000;font-weight:normal;white-space:nowrap;">Score N/A</div>
<div style="position:absolute;left:666px;top:724px;width:1px;height:19px;box-sizing:border-box;background:#8d7968;"></div>
<div style="position:absolute;left:672px;top:724.69px;font-size:11px;line-height:15px;color:#000;font-weight:normal;white-space:nowrap;">Score 0</div>
<div style="position:absolute;left:766px;top:724px;width:1px;height:19px;box-sizing:border-box;background:#8d7968;"></div>
<div style="position:absolute;left:772px;top:724.69px;font-size:11px;line-height:15px;color:#000;font-weight:normal;white-space:nowrap;">Score 1</div>
<div style="position:absolute;left:866px;top:724px;width:1px;height:19px;box-sizing:border-box;background:#8d7968;"></div>
<div style="position:absolute;left:872px;top:724.69px;font-size:11px;line-height:15px;color:#000;font-weight:normal;white-space:nowrap;">Score 2</div>
<div style="position:absolute;left:966px;top:724px;width:1px;height:19px;box-sizing:border-box;background:#8d7968;"></div>
<div style="position:absolute;left:972px;top:724.69px;font-size:11px;line-height:15px;color:#000;font-weight:normal;white-space:nowrap;">Score 3</div>
<div style="position:absolute;left:1066px;top:724px;width:1px;height:19px;box-sizing:border-box;background:#8d7968;"></div>
<div style="position:absolute;left:1072px;top:724.69px;font-size:11px;line-height:15px;color:#000;font-weight:normal;white-space:nowrap;">Score 4</div>
<div style="position:absolute;left:1166px;top:724px;width:1px;height:19px;box-sizing:border-box;background:#8d7968;"></div>
<div style="position:absolute;left:1172px;top:724.69px;font-size:11px;line-height:15px;color:#000;font-weight:normal;white-space:nowrap;">Sc...</div>
<div style="position:absolute;left:1203px;top:724px;width:1px;height:19px;box-sizing:border-box;background:#8d7968;"></div>
<div style="position:absolute;left:566px;top:742px;width:655px;height:1px;box-sizing:border-box;background:#8d7968;"></div>
<div style="position:absolute;left:566px;top:743px;width:638px;height:157px;box-sizing:border-box;background:#3168c5;"></div>
<div style="position:absolute;left:467px;top:743px;width:99px;height:20px;box-sizing:border-box;background:linear-gradient(#f6f3ec,#e9e3d6);box-shadow:inset 1px 1px 0 #fff;border-bottom:1px solid #8d7968;"></div>
<div style="position:absolute;left:473px;top:744.69px;font-size:11px;line-height:15px;color:#000;font-weight:normal;white-space:nowrap;">0</div>
<div style="position:absolute;left:566px;top:762px;width:638px;height:1px;box-sizing:border-box;background:#dcd6ca;"></div>
<div style="position:absolute;right:588px;top:745.69px;font-size:11px;line-height:15px;color:#fff;font-weight:normal;white-space:nowrap;text-align:right;">0.00 %</div>
<div style="position:absolute;right:488px;top:745.69px;font-size:11px;line-height:15px;color:#fff;font-weight:normal;white-space:nowrap;text-align:right;">0.00 %</div>
<div style="position:absolute;right:388px;top:745.69px;font-size:11px;line-height:15px;color:#fff;font-weight:normal;white-space:nowrap;text-align:right;">15.89 %</div>
<div style="position:absolute;right:288px;top:745.69px;font-size:11px;line-height:15px;color:#fff;font-weight:normal;white-space:nowrap;text-align:right;">29.83 %</div>
<div style="position:absolute;right:188px;top:745.69px;font-size:11px;line-height:15px;color:#fff;font-weight:normal;white-space:nowrap;text-align:right;">37.56 %</div>
<div style="position:absolute;right:88px;top:745.69px;font-size:11px;line-height:15px;color:#fff;font-weight:normal;white-space:nowrap;text-align:right;">15.02 %</div>
<div style="position:absolute;left:467px;top:763px;width:99px;height:20px;box-sizing:border-box;background:linear-gradient(#f6f3ec,#e9e3d6);box-shadow:inset 1px 1px 0 #fff;border-bottom:1px solid #8d7968;"></div>
<div style="position:absolute;left:473px;top:764.69px;font-size:11px;line-height:15px;color:#000;font-weight:normal;white-space:nowrap;">1</div>
<div style="position:absolute;left:566px;top:782px;width:638px;height:1px;box-sizing:border-box;background:#dcd6ca;"></div>
<div style="position:absolute;right:588px;top:765.69px;font-size:11px;line-height:15px;color:#fff;font-weight:normal;white-space:nowrap;text-align:right;">0.00 %</div>
<div style="position:absolute;right:488px;top:765.69px;font-size:11px;line-height:15px;color:#fff;font-weight:normal;white-space:nowrap;text-align:right;">3.26 %</div>
<div style="position:absolute;right:388px;top:765.69px;font-size:11px;line-height:15px;color:#fff;font-weight:normal;white-space:nowrap;text-align:right;">12.66 %</div>
<div style="position:absolute;right:288px;top:765.69px;font-size:11px;line-height:15px;color:#fff;font-weight:normal;white-space:nowrap;text-align:right;">33.81 %</div>
<div style="position:absolute;right:188px;top:765.69px;font-size:11px;line-height:15px;color:#fff;font-weight:normal;white-space:nowrap;text-align:right;">34.07 %</div>
<div style="position:absolute;right:88px;top:765.69px;font-size:11px;line-height:15px;color:#fff;font-weight:normal;white-space:nowrap;text-align:right;">14.27 %</div>
<div style="position:absolute;left:467px;top:783px;width:99px;height:20px;box-sizing:border-box;background:linear-gradient(#f6f3ec,#e9e3d6);box-shadow:inset 1px 1px 0 #fff;border-bottom:1px solid #8d7968;"></div>
<div style="position:absolute;left:473px;top:784.69px;font-size:11px;line-height:15px;color:#000;font-weight:normal;white-space:nowrap;">2</div>
<div style="position:absolute;left:566px;top:802px;width:638px;height:1px;box-sizing:border-box;background:#dcd6ca;"></div>
<div style="position:absolute;right:588px;top:785.69px;font-size:11px;line-height:15px;color:#fff;font-weight:normal;white-space:nowrap;text-align:right;">0.00 %</div>
<div style="position:absolute;right:488px;top:785.69px;font-size:11px;line-height:15px;color:#fff;font-weight:normal;white-space:nowrap;text-align:right;">3.22 %</div>
<div style="position:absolute;right:388px;top:785.69px;font-size:11px;line-height:15px;color:#fff;font-weight:normal;white-space:nowrap;text-align:right;">12.37 %</div>
<div style="position:absolute;right:288px;top:785.69px;font-size:11px;line-height:15px;color:#fff;font-weight:normal;white-space:nowrap;text-align:right;">34.38 %</div>
<div style="position:absolute;right:188px;top:785.69px;font-size:11px;line-height:15px;color:#fff;font-weight:normal;white-space:nowrap;text-align:right;">33.99 %</div>
<div style="position:absolute;right:88px;top:785.69px;font-size:11px;line-height:15px;color:#fff;font-weight:normal;white-space:nowrap;text-align:right;">14.04 %</div>
<div style="position:absolute;left:467px;top:803px;width:99px;height:20px;box-sizing:border-box;background:linear-gradient(#f6f3ec,#e9e3d6);box-shadow:inset 1px 1px 0 #fff;border-bottom:1px solid #8d7968;"></div>
<div style="position:absolute;left:473px;top:804.69px;font-size:11px;line-height:15px;color:#000;font-weight:normal;white-space:nowrap;">3</div>
<div style="position:absolute;left:566px;top:822px;width:638px;height:1px;box-sizing:border-box;background:#dcd6ca;"></div>
<div style="position:absolute;right:588px;top:805.69px;font-size:11px;line-height:15px;color:#fff;font-weight:normal;white-space:nowrap;text-align:right;">0.00 %</div>
<div style="position:absolute;right:488px;top:805.69px;font-size:11px;line-height:15px;color:#fff;font-weight:normal;white-space:nowrap;text-align:right;">3.13 %</div>
<div style="position:absolute;right:388px;top:805.69px;font-size:11px;line-height:15px;color:#fff;font-weight:normal;white-space:nowrap;text-align:right;">12.48 %</div>
<div style="position:absolute;right:288px;top:805.69px;font-size:11px;line-height:15px;color:#fff;font-weight:normal;white-space:nowrap;text-align:right;">34.02 %</div>
<div style="position:absolute;right:188px;top:805.69px;font-size:11px;line-height:15px;color:#fff;font-weight:normal;white-space:nowrap;text-align:right;">35.18 %</div>
<div style="position:absolute;right:88px;top:805.69px;font-size:11px;line-height:15px;color:#fff;font-weight:normal;white-space:nowrap;text-align:right;">12.79 %</div>
<div style="position:absolute;left:467px;top:823px;width:99px;height:20px;box-sizing:border-box;background:linear-gradient(#f6f3ec,#e9e3d6);box-shadow:inset 1px 1px 0 #fff;border-bottom:1px solid #8d7968;"></div>
<div style="position:absolute;left:473px;top:824.69px;font-size:11px;line-height:15px;color:#000;font-weight:normal;white-space:nowrap;">4</div>
<div style="position:absolute;left:566px;top:842px;width:638px;height:1px;box-sizing:border-box;background:#dcd6ca;"></div>
<div style="position:absolute;right:588px;top:825.69px;font-size:11px;line-height:15px;color:#fff;font-weight:normal;white-space:nowrap;text-align:right;">0.00 %</div>
<div style="position:absolute;right:488px;top:825.69px;font-size:11px;line-height:15px;color:#fff;font-weight:normal;white-space:nowrap;text-align:right;">2.77 %</div>
<div style="position:absolute;right:388px;top:825.69px;font-size:11px;line-height:15px;color:#fff;font-weight:normal;white-space:nowrap;text-align:right;">12.89 %</div>
<div style="position:absolute;right:288px;top:825.69px;font-size:11px;line-height:15px;color:#fff;font-weight:normal;white-space:nowrap;text-align:right;">33.18 %</div>
<div style="position:absolute;right:188px;top:825.69px;font-size:11px;line-height:15px;color:#fff;font-weight:normal;white-space:nowrap;text-align:right;">36.91 %</div>
<div style="position:absolute;right:88px;top:825.69px;font-size:11px;line-height:15px;color:#fff;font-weight:normal;white-space:nowrap;text-align:right;">12.08 %</div>
<div style="position:absolute;left:467px;top:843px;width:99px;height:20px;box-sizing:border-box;background:linear-gradient(#f6f3ec,#e9e3d6);box-shadow:inset 1px 1px 0 #fff;border-bottom:1px solid #8d7968;"></div>
<div style="position:absolute;left:473px;top:844.69px;font-size:11px;line-height:15px;color:#000;font-weight:normal;white-space:nowrap;">5</div>
<div style="position:absolute;left:566px;top:862px;width:638px;height:1px;box-sizing:border-box;background:#dcd6ca;"></div>
<div style="position:absolute;right:588px;top:845.69px;font-size:11px;line-height:15px;color:#fff;font-weight:normal;white-space:nowrap;text-align:right;">0.00 %</div>
<div style="position:absolute;right:488px;top:845.69px;font-size:11px;line-height:15px;color:#fff;font-weight:normal;white-space:nowrap;text-align:right;">2.17 %</div>
<div style="position:absolute;right:388px;top:845.69px;font-size:11px;line-height:15px;color:#fff;font-weight:normal;white-space:nowrap;text-align:right;">13.02 %</div>
<div style="position:absolute;right:288px;top:845.69px;font-size:11px;line-height:15px;color:#fff;font-weight:normal;white-space:nowrap;text-align:right;">34.41 %</div>
<div style="position:absolute;right:188px;top:845.69px;font-size:11px;line-height:15px;color:#fff;font-weight:normal;white-space:nowrap;text-align:right;">36.55 %</div>
<div style="position:absolute;right:88px;top:845.69px;font-size:11px;line-height:15px;color:#fff;font-weight:normal;white-space:nowrap;text-align:right;">11.61 %</div>
<div style="position:absolute;left:467px;top:863px;width:99px;height:20px;box-sizing:border-box;background:linear-gradient(#f6f3ec,#e9e3d6);box-shadow:inset 1px 1px 0 #fff;border-bottom:1px solid #8d7968;"></div>
<div style="position:absolute;left:473px;top:864.69px;font-size:11px;line-height:15px;color:#000;font-weight:normal;white-space:nowrap;">6</div>
<div style="position:absolute;left:566px;top:882px;width:638px;height:1px;box-sizing:border-box;background:#dcd6ca;"></div>
<div style="position:absolute;right:588px;top:865.69px;font-size:11px;line-height:15px;color:#fff;font-weight:normal;white-space:nowrap;text-align:right;">0.00 %</div>
<div style="position:absolute;right:488px;top:865.69px;font-size:11px;line-height:15px;color:#fff;font-weight:normal;white-space:nowrap;text-align:right;">1.20 %</div>
<div style="position:absolute;right:388px;top:865.69px;font-size:11px;line-height:15px;color:#fff;font-weight:normal;white-space:nowrap;text-align:right;">13.89 %</div>
<div style="position:absolute;right:288px;top:865.69px;font-size:11px;line-height:15px;color:#fff;font-weight:normal;white-space:nowrap;text-align:right;">36.46 %</div>
<div style="position:absolute;right:188px;top:865.69px;font-size:11px;line-height:15px;color:#fff;font-weight:normal;white-space:nowrap;text-align:right;">34.47 %</div>
<div style="position:absolute;right:88px;top:865.69px;font-size:11px;line-height:15px;color:#fff;font-weight:normal;white-space:nowrap;text-align:right;">11.69 %</div>
<div style="position:absolute;left:467px;top:883px;width:99px;height:17px;box-sizing:border-box;background:linear-gradient(#f6f3ec,#e9e3d6);box-shadow:inset 1px 1px 0 #fff;"></div>
<div style="position:absolute;left:473px;top:884.69px;font-size:11px;line-height:15px;color:#000;font-weight:normal;white-space:nowrap;">7</div>
<div style="position:absolute;right:588px;top:885.69px;font-size:11px;line-height:15px;color:#fff;font-weight:normal;white-space:nowrap;text-align:right;">0.00 %</div>
<div style="position:absolute;right:488px;top:885.69px;font-size:11px;line-height:15px;color:#fff;font-weight:normal;white-space:nowrap;text-align:right;">1.41 %</div>
<div style="position:absolute;right:388px;top:885.69px;font-size:11px;line-height:15px;color:#fff;font-weight:normal;white-space:nowrap;text-align:right;">13.30 %</div>
<div style="position:absolute;right:288px;top:885.69px;font-size:11px;line-height:15px;color:#fff;font-weight:normal;white-space:nowrap;text-align:right;">38.28 %</div>
<div style="position:absolute;right:188px;top:885.69px;font-size:11px;line-height:15px;color:#fff;font-weight:normal;white-space:nowrap;text-align:right;">32.31 %</div>
<div style="position:absolute;right:88px;top:885.69px;font-size:11px;line-height:15px;color:#fff;font-weight:normal;white-space:nowrap;text-align:right;">12.13 %</div>
<div style="position:absolute;left:666px;top:743px;width:1px;height:157px;box-sizing:border-box;background:#dcd6ca;"></div>
<div style="position:absolute;left:766px;top:743px;width:1px;height:157px;box-sizing:border-box;background:#dcd6ca;"></div>
<div style="position:absolute;left:866px;top:743px;width:1px;height:157px;box-sizing:border-box;background:#dcd6ca;"></div>
<div style="position:absolute;left:966px;top:743px;width:1px;height:157px;box-sizing:border-box;background:#dcd6ca;"></div>
<div style="position:absolute;left:1066px;top:743px;width:1px;height:157px;box-sizing:border-box;background:#dcd6ca;"></div>
<div style="position:absolute;left:1166px;top:743px;width:1px;height:157px;box-sizing:border-box;background:#dcd6ca;"></div>
<div style="position:absolute;left:467px;top:743px;width:99px;height:1px;box-sizing:border-box;background:#8d7968;"></div>
<div style="position:absolute;left:566px;top:743px;width:1px;height:157px;box-sizing:border-box;background:#8d7968;"></div>
<div style="position:absolute;left:1204px;top:743px;width:17px;height:157px;box-sizing:border-box;background:linear-gradient(90deg,#ebe4d6,#f9f7f2);"></div>
<div style="position:absolute;left:1204px;top:743px;width:17px;height:17px;box-sizing:border-box;border:1px solid #8d7968;border-radius:3px;background:linear-gradient(135deg,#faf8f3,#e9e2d4);"></div>
<svg style="position:absolute;left:1207px;top:747px" width="11" height="8" viewBox="0 0 11 8"><path d="M1.5 6L5.5 2L9.5 6" fill="none" stroke="#7d6b5c" stroke-width="1.3"/></svg>
<div style="position:absolute;left:1204px;top:761px;width:17px;height:39px;box-sizing:border-box;border:1px solid #8d7968;border-radius:3px;background:linear-gradient(135deg,#faf8f3,#e9e2d4);"></div>
<div style="position:absolute;left:1209px;top:778px;width:7px;height:1px;box-sizing:border-box;background:#8d7968;"></div>
<div style="position:absolute;left:1209px;top:780px;width:7px;height:1px;box-sizing:border-box;background:#8d7968;"></div>
<div style="position:absolute;left:1209px;top:782px;width:7px;height:1px;box-sizing:border-box;background:#8d7968;"></div>
<div style="position:absolute;left:1204px;top:883px;width:17px;height:17px;box-sizing:border-box;border:1px solid #8d7968;border-radius:3px;background:linear-gradient(135deg,#faf8f3,#e9e2d4);"></div>
<svg style="position:absolute;left:1207px;top:888px" width="11" height="8" viewBox="0 0 11 8"><path d="M1.5 2L5.5 6L9.5 2" fill="none" stroke="#7d6b5c" stroke-width="1.3"/></svg>
<div style="position:absolute;left:1204px;top:900px;width:17px;height:17px;box-sizing:border-box;background:#f5f4f0;"></div>
<div style="position:absolute;left:567px;top:900px;width:637px;height:17px;box-sizing:border-box;background:linear-gradient(#ebe4d6,#f9f7f2);"></div>
<div style="position:absolute;left:567px;top:900px;width:17px;height:17px;box-sizing:border-box;border:1px solid #8d7968;border-radius:3px;background:linear-gradient(135deg,#faf8f3,#e9e2d4);"></div>
<svg style="position:absolute;left:572px;top:903px" width="8" height="11" viewBox="0 0 8 11"><path d="M6 1.5L2 5.5L6 9.5" fill="none" stroke="#7d6b5c" stroke-width="1.3"/></svg>
<div style="position:absolute;left:585px;top:900px;width:450px;height:17px;box-sizing:border-box;border:1px solid #8d7968;border-radius:3px;background:linear-gradient(135deg,#faf8f3,#e9e2d4);"></div>
<div style="position:absolute;left:807px;top:905px;width:1px;height:7px;box-sizing:border-box;background:#8d7968;"></div>
<div style="position:absolute;left:809px;top:905px;width:1px;height:7px;box-sizing:border-box;background:#8d7968;"></div>
<div style="position:absolute;left:811px;top:905px;width:1px;height:7px;box-sizing:border-box;background:#8d7968;"></div>
<div style="position:absolute;left:1187px;top:900px;width:17px;height:17px;box-sizing:border-box;border:1px solid #8d7968;border-radius:3px;background:linear-gradient(135deg,#faf8f3,#e9e2d4);"></div>
<svg style="position:absolute;left:1191px;top:903px" width="8" height="11" viewBox="0 0 8 11"><path d="M2 1.5L6 5.5L2 9.5" fill="none" stroke="#7d6b5c" stroke-width="1.3"/></svg>
</body></html>
